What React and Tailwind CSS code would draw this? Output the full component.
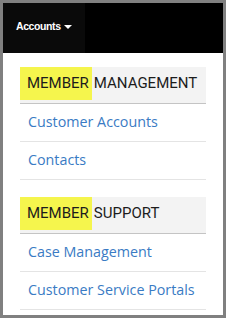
const sections = [
  { label: 'MANAGEMENT', items: ['Customer Accounts', 'Contacts'] },
  { label: 'SUPPORT', items: ['Case Management', 'Customer Service Portals'] },
];

const SectionHeader = ({ label }) => (
  <div className="h-[37px] bg-[#f3f3f3] border-b border-[#c4c4c4] flex items-start font-['Roboto',sans-serif] text-[15px] text-[#1c1c1c]">
    <span className="h-[33px] pl-[7px] pr-[3px] bg-[#f5f54d] flex items-center">MEMBER</span>
    <span className="h-[33px] pl-[2px] flex items-center">{label}</span>
  </div>
);

export default function App() {
  return (
    <div className="w-[226px] h-[318px] border-[3px] border-[#808080] bg-white flex flex-col overflow-hidden">
      <div className="h-[50px] shrink-0 bg-black flex">
        <div className="w-[82px] bg-[#0a0a0a] flex items-center pl-[13px] pb-[3px] gap-[3px]">
          <span className="font-['Liberation_Sans',Arial,sans-serif] font-bold text-[10.5px] tracking-[-0.4px] text-white">
            Accounts
          </span>
          <span className="w-0 h-0 border-l-[4px] border-r-[4px] border-t-[4px] border-l-transparent border-r-transparent border-t-white mt-[1px]" />
        </div>
      </div>

      <div className="px-[17px] pt-[14px] flex flex-col gap-[17px]">
        {sections.map((section) => (
          <div key={section.label} className="flex flex-col">
            <SectionHeader label={section.label} />
            {section.items.map((item) => (
              <a
                key={item}
                href="#"
                className="h-[38px] border-b border-[#e4e4e4] flex items-center pl-[8px] pb-[2px] font-['Open_Sans',sans-serif] text-[14.3px] text-[#3a7bc4]"
              >
                {item}
              </a>
            ))}
          </div>
        ))}
      </div>
    </div>
  );
}
